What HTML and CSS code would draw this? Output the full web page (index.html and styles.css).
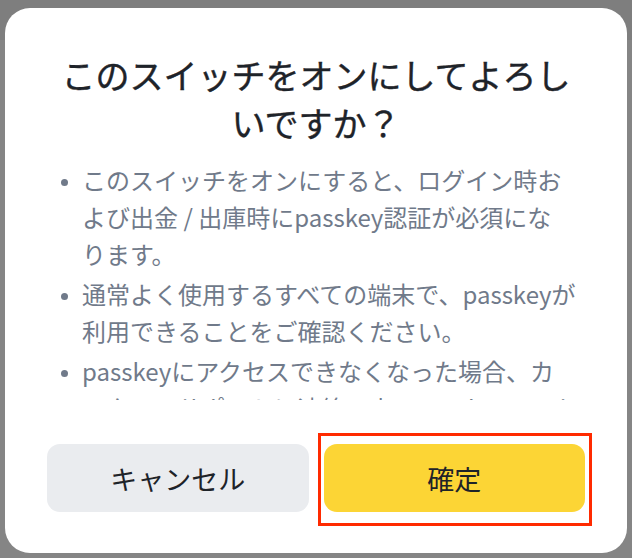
FILE: index.html
```html
<!DOCTYPE html>
<html lang="ja">
<head>
<meta charset="utf-8">
<link rel="stylesheet" href="styles.css">
</head>
<body>
<div class="modal">
  <h1 class="title">このスイッチをオンにしてよろしいですか？</h1>
  <div class="scroll">
    <ul class="notes">
      <li>このスイッチをオンにすると、ログイン時および出金 / 出庫時にpasskey認証が必須にな<span class="nw">ります。</span></li>
      <li>通常よく使用するすべての端末で、passkeyが利用できることをご確認ください。</li>
      <li>passkeyにアクセスできなくなった場合、カ<span class="nw">スタ</span>マーサポートに連絡の上、passkeyのリセットを行ってください。</li>
    </ul>
  </div>
  <div class="actions">
    <button class="btn btn-cancel">キャンセル</button>
    <div class="confirm-wrap">
      <button class="btn btn-confirm">確定</button>
      <span class="highlight"></span>
    </div>
  </div>
</div>
</body>
</html>
```
FILE: styles.css
```css
* { box-sizing: border-box; }
html, body { margin: 0; height: 100%; }
body {
  background: linear-gradient(#7e7e7e 0, #7e7e7e 40px, #858585 40px);
  padding: 8px 5px 5px 5px;
  font-family: "Noto Sans CJK JP", "Noto Sans", sans-serif;
}
.modal {
  background: #fff;
  border-radius: 25px;
  height: 545px;
  padding: 43px 42px 41px 42px;
  display: flex;
  flex-direction: column;
}
.title {
  margin: 0;
  font-size: 34px;
  line-height: 48px;
  font-weight: 400;
  color: #1e2329;
  text-align: center;
  -webkit-text-stroke: 0.4px #1e2329;
}
.scroll {
  margin-top: 14px;
  height: 239px;
  overflow: hidden;
}
.notes {
  margin: 0;
  padding: 0 5px 0 35px;
  color: #707a8a;
  font-size: 24px;
  line-height: 37px;
}
.notes li { margin-bottom: 3px; }
.notes li::marker { font-size: 18px; }
.nw { white-space: nowrap; }
.actions {
  margin-top: auto;
  display: flex;
  gap: 15px;
}
.btn {
  border: 0;
  border-radius: 13px;
  height: 68px;
  width: 100%;
  font-family: inherit;
  font-size: 27px;
  font-weight: 400;
  color: #1e2329;
  padding: 0;
}
.btn-cancel { flex: 1; background: #eaecef; }
.confirm-wrap { flex: 1; position: relative; display: flex; }
.btn-confirm { background: #fcd535; }
.highlight {
  position: absolute;
  top: -11px;
  left: -6px;
  right: -7px;
  bottom: -14px;
  border: 3px solid #ff2a00;
  pointer-events: none;
}
```
